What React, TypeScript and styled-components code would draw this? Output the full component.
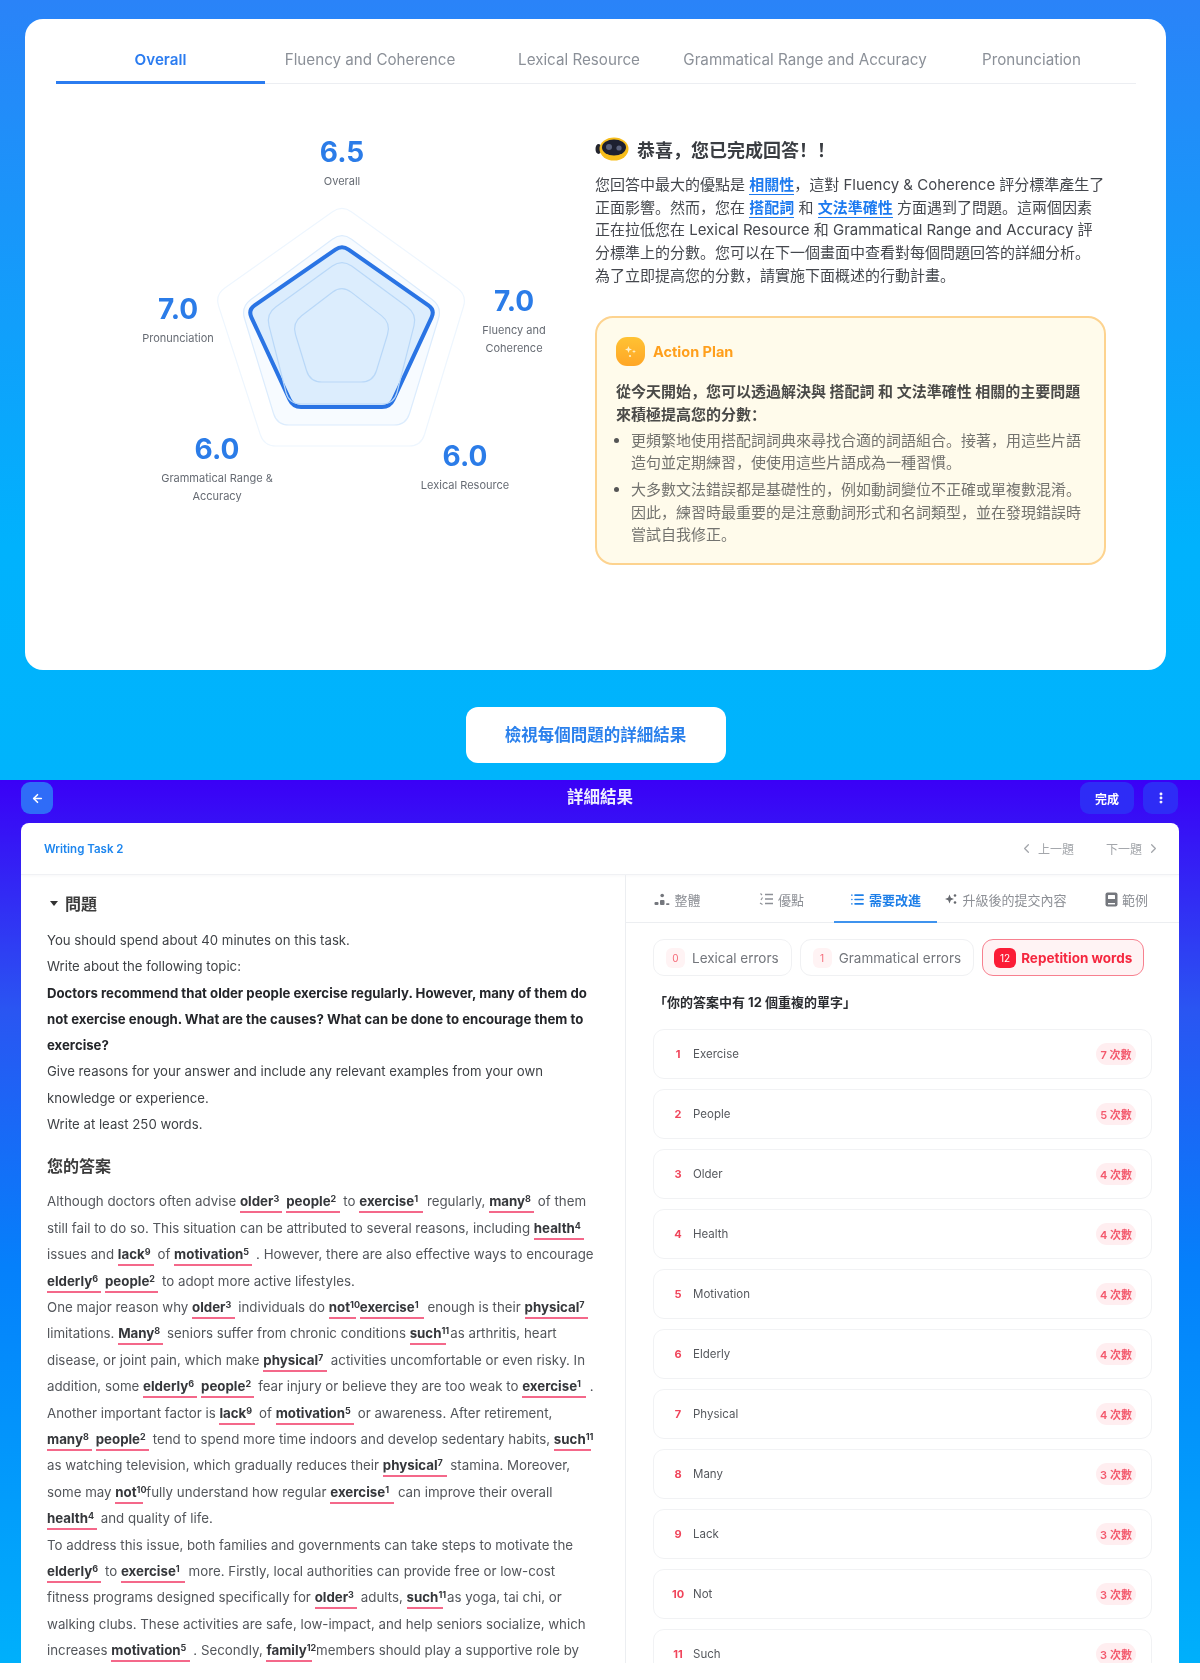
import React from "react";
import styled, { createGlobalStyle } from "styled-components";
import { ArrowLeft, ChevronLeft, ChevronRight, EllipsisVertical, List } from "lucide-react";

const GlobalStyle = createGlobalStyle`
  * { box-sizing: border-box; }
  html, body { margin: 0; padding: 0; background: #fff; }
  body {
    font-family: Inter, "Noto Sans CJK SC", "Noto Sans", sans-serif;
    color: #333;
  }
`;

const Page = styled.div`
  width: 1200px;
  height: 1680px;
  overflow: hidden;
  filter: blur(0.35px);
`;

/* top: results summary */
const Summary = styled.section`
  height: 780px;
  padding: 19px 34px 0 25px;
  background: linear-gradient(180deg, #2a83f8 0%, #00b2fd 70%, #00b4fc 100%);
`;

const SummaryCard = styled.div`
  height: 651px;
  padding: 16px 30px 0 31px;
  background: #fff;
  border-radius: 18px;
`;

const ScoreTabs = styled.div`
  display: grid;
  grid-template-columns: 209px 210px 208px 244px 209px;
  border-bottom: 1px solid #eceef2;
  height: 49px;
`;

const ScoreTab = styled.div<{ $active?: boolean }>`
  display: flex;
  align-items: center;
  justify-content: center;
  height: 49px;
  padding-top: 3px;
  font-size: 15.2px;
  white-space: nowrap;
  font-weight: ${(p) => (p.$active ? 600 : 400)};
  color: ${(p) => (p.$active ? "#2b7cf0" : "#8b9098")};
  border-bottom: 3px solid ${(p) => (p.$active ? "#2b7cf0" : "transparent")};
`;

const SummaryBody = styled.div`
  display: grid;
  grid-template-columns: 514px 512px;
  column-gap: 25px;
  padding-top: 46px;
`;

const RadarBox = styled.div`
  position: relative;
  width: 514px;
  height: 430px;
`;

const ScoreLabel = styled.div`
  position: absolute;
  width: 140px;
  transform: translateX(-50%);
  text-align: center;
`;

const ScoreValue = styled.div`
  font-size: 28px;
  line-height: 34px;
  font-weight: 700;
  color: #2b7ce8;
`;

const ScoreName = styled.div`
  margin-top: 4px;
  font-size: 11px;
  line-height: 17.5px;
  color: #666b73;
`;

const Feedback = styled.div`
  padding-top: 3px;
`;

const Greeting = styled.h2`
  display: flex;
  align-items: center;
  gap: 8px;
  margin: 0;
  height: 32px;
  font-size: 18px;
  font-weight: 700;
  color: #3a3d42;
`;

const Intro = styled.p`
  margin: 9px 0 0;
  width: 510px;
  font-size: 15px;
  line-height: 22.7px;
  color: #44474d;
`;

const Highlight = styled.span`
  color: #1c7af0;
  font-weight: 700;
  border-bottom: 1.5px solid #1c7af0;
`;

const PlanBox = styled.div`
  margin-top: 28px;
  width: 511px;
  height: 249px;
  padding: 19px 19px;
  background: #fffbeb;
  border: 2px solid #fdd38f;
  border-radius: 18px;
`;

const PlanHead = styled.div`
  display: flex;
  align-items: center;
  gap: 8px;
  font-size: 14.5px;
  font-weight: 700;
  color: #ff9f1c;
`;

const PlanIcon = styled.div`
  display: flex;
  align-items: center;
  justify-content: center;
  width: 29px;
  height: 29px;
  border-radius: 11px;
  background: linear-gradient(180deg, #ffc233, #ffa626);
`;

const PlanLead = styled.p`
  margin: 14px 0 0;
  font-size: 15px;
  line-height: 23px;
  font-weight: 700;
  color: #4a4a48;
`;

const PlanList = styled.ul`
  margin: 4px 0 0;
  padding: 0 0 0 15px;
  font-size: 15px;
  line-height: 22.7px;
  color: #73736f;
`;

const PlanItem = styled.li`
  margin-bottom: 4px;
  &::marker { color: #555; }
`;

const Cta = styled.button`
  display: block;
  width: 260px;
  height: 56px;
  margin: 37px auto 0;
  padding: 0 0 2px;
  border: 0;
  border-radius: 12px;
  background: #fff;
  font-family: inherit;
  font-size: 16.5px;
  font-weight: 700;
  color: #2a80ec;
`;

/* bottom: detail view, stops short of the page end */
const Detail = styled.section`
  height: 883px;
  display: flex;
  flex-direction: column;
  padding: 0 21px;
  background: linear-gradient(180deg, #3a00f6 0%, #2a55f2 26%, #0580fb 55%, #00b0fb 100%);
`;

const TopBar = styled.header`
  display: grid;
  grid-template-columns: 1fr auto 1fr;
  align-items: start;
  height: 43px;
  padding-top: 2px;
  flex: none;
`;

const BarGroup = styled.div<{ $end?: boolean }>`
  display: flex;
  gap: 9px;
  justify-content: ${(p) => (p.$end ? "flex-end" : "flex-start")};
  padding-right: ${(p) => (p.$end ? "1px" : "0")};
`;

const BarTitle = styled.div`
  font-size: 16.5px;
  line-height: 30px;
  font-weight: 700;
  color: #eef0ff;
`;

const BarButton = styled.button<{ $bright?: boolean; $wide?: boolean }>`
  display: flex;
  align-items: center;
  justify-content: center;
  width: ${(p) => (p.$wide ? "54px" : p.$bright ? "32px" : "35px")};
  height: 32px;
  padding: 0;
  border: 0;
  border-radius: 9px;
  font-family: inherit;
  font-size: 12px;
  font-weight: 700;
  color: #fff;
  background: ${(p) => (p.$bright ? "#2f6cf8" : "#2e2cf6")};
`;

const DetailCard = styled.div`
  flex: 1;
  min-height: 0;
  overflow: hidden;
  background: #fff;
  border-radius: 8px 8px 0 0;
`;

const CardHead = styled.div`
  display: flex;
  align-items: center;
  justify-content: space-between;
  height: 52px;
  padding: 0 18px 0 23px;
  border-bottom: 1px solid #f0f1f4;
  box-shadow: 0 1px 3px rgba(20, 30, 60, 0.03);
`;

const TaskName = styled.div`
  font-size: 11.5px;
  font-weight: 600;
  color: #1e86ee;
`;

const Pager = styled.div`
  display: flex;
  gap: 32px;
`;

const PagerLink = styled.div`
  display: flex;
  align-items: center;
  gap: 4px;
  font-size: 12px;
  color: #a3a6ab;
`;

const Split = styled.div`
  display: grid;
  grid-template-columns: 605px 553px;
`;

const Question = styled.div`
  padding: 17px 26px 0;
  border-right: 1px solid #eceef1;
  height: 788px;
  overflow: hidden;
`;

const SectionTitle = styled.h3`
  display: flex;
  align-items: center;
  gap: 7px;
  margin: 0;
  height: 22px;
  font-size: 16px;
  font-weight: 700;
  color: #3c3c3c;
`;

const Caret = styled.span`
  width: 0;
  height: 0;
  margin-left: 3px;
  border-left: 4.5px solid transparent;
  border-right: 4.5px solid transparent;
  border-top: 5px solid #333;
`;

const Prompt = styled.div`
  margin-top: 13px;
  font-size: 13.2px;
  line-height: 26.3px;
  color: #3f4246;
`;

const PromptStrong = styled.div`
  font-weight: 700;
  color: #24262a;
`;

const AnswerTitle = styled(SectionTitle)`
  margin-top: 17px;
`;

const Answer = styled.div`
  margin-top: 12px;
  font-size: 13.3px;
  line-height: 26.4px;
  white-space: pre;
  color: #53565b;
`;

const Marked = styled.span`
  padding-bottom: 2px;
  font-weight: 700;
  color: #35373b;
  border-bottom: 2px solid #f4688a;
`;

const MarkNo = styled.sup<{ $wide: boolean }>`
  display: inline-block;
  min-width: 9px;
  margin-right: ${(p) => (p.$wide ? "-4px" : "0")};
  font-size: 9px;
  line-height: 0;
  vertical-align: 4px;
`;

const Review = styled.div`
  min-width: 0;
`;

const ReviewTabs = styled.div`
  display: grid;
  grid-template-columns: 103px 105px 103px 137px 1fr;
  height: 48px;
  border-bottom: 1px solid #eceef1;
`;

const ReviewTab = styled.div<{ $active?: boolean }>`
  display: flex;
  align-items: center;
  justify-content: center;
  gap: 4px;
  height: 48px;
  padding-top: 2px;
  font-size: 13px;
  white-space: nowrap;
  font-weight: ${(p) => (p.$active ? 700 : 400)};
  color: ${(p) => (p.$active ? "#1e7fe8" : "#8d9096")};
  border-bottom: 2px solid ${(p) => (p.$active ? "#3f93ee" : "transparent")};
`;

const ReviewBody = styled.div`
  padding: 16px 27px 0 27px;
`;

const Filters = styled.div`
  display: flex;
  gap: 8px;
`;

const Filter = styled.div<{ $on?: boolean }>`
  display: flex;
  align-items: center;
  gap: ${(p) => (p.$on ? "5px" : "7px")};
  height: 37px;
  padding: 0 ${(p) => (p.$on ? "11px" : "12px")};
  font-size: 13.5px;
  white-space: nowrap;
  font-weight: ${(p) => (p.$on ? 700 : 400)};
  color: ${(p) => (p.$on ? "#f5273f" : "#73767c")};
  background: ${(p) => (p.$on ? "#fff3f4" : "#fff")};
  border: ${(p) => (p.$on ? "1.5px solid #f7808f" : "1px solid #f0f1f3")};
  border-radius: 11px;
`;

const FilterCount = styled.span<{ $on?: boolean }>`
  display: flex;
  align-items: center;
  justify-content: center;
  min-width: ${(p) => (p.$on ? "22px" : "19px")};
  height: 20px;
  border-radius: 6px;
  font-size: 10px;
  font-weight: 400;
  color: ${(p) => (p.$on ? "#fff" : "#f56a78")};
  background: ${(p) => (p.$on ? "#fb1c36" : "#fff3f4")};
`;

const RepeatTitle = styled.div`
  margin: 16px 0 17px 1px;
  font-size: 13px;
  line-height: 20px;
  font-weight: 700;
  color: #2a2c30;
`;

const WordRows = styled.div`
  display: flex;
  flex-direction: column;
  gap: 10px;
`;

const WordRow = styled.div`
  display: flex;
  align-items: center;
  flex: none;
  height: 50px;
  padding: 0 15px 0 14px;
  border: 1px solid #f1f2f4;
  border-radius: 11px;
`;

const WordNo = styled.span`
  width: 20px;
  margin-right: 5px;
  text-align: center;
  font-size: 11px;
  font-weight: 700;
  color: #f0455b;
`;

const WordText = styled.span`
  flex: 1;
  font-size: 11.5px;
  color: #55585d;
`;

const WordCount = styled.span`
  display: flex;
  align-items: center;
  justify-content: center;
  width: 40px;
  height: 22px;
  border-radius: 11px;
  font-size: 11px;
  font-weight: 600;
  color: #f3596d;
  background: #ffeef0;
`;

const tabs = ["Overall", "Fluency and Coherence", "Lexical Resource", "Grammatical Range and Accuracy", "Pronunciation"];

// page coordinates, the svg viewBox starts at the radar box corner
const ox = 56;
const oy = 130;

const scores = [
  { value: "6.5", name: ["Overall"], x: 342, y: 135 },
  { value: "7.0", name: ["Fluency and", "Coherence"], x: 514, y: 284 },
  { value: "6.0", name: ["Lexical Resource"], x: 465, y: 439 },
  { value: "6.0", name: ["Grammatical Range &", "Accuracy"], x: 217, y: 432 },
  { value: "7.0", name: ["Pronunciation"], x: 178, y: 292 },
];

type Pt = [number, number];

function roundedPath(pts: Pt[], r: number) {
  const n = pts.length;
  let d = "";
  pts.forEach((p, i) => {
    const a = pts[(i + n - 1) % n];
    const b = pts[(i + 1) % n];
    const la = Math.hypot(a[0] - p[0], a[1] - p[1]);
    const lb = Math.hypot(b[0] - p[0], b[1] - p[1]);
    const s: Pt = [p[0] + ((a[0] - p[0]) * r) / la, p[1] + ((a[1] - p[1]) * r) / la];
    const e: Pt = [p[0] + ((b[0] - p[0]) * r) / lb, p[1] + ((b[1] - p[1]) * r) / lb];
    d += `${i === 0 ? "M" : "L"}${s[0].toFixed(1)} ${s[1].toFixed(1)}Q${p[0]} ${p[1]} ${e[0].toFixed(1)} ${e[1].toFixed(1)}`;
  });
  return d + "Z";
}

const rings: { pts: Pt[]; stroke: string; fill: string }[] = [
  { pts: [[342, 205], [467, 295], [421, 446], [264, 446], [215, 295]], stroke: "#eef6fe", fill: "#fff" },
  { pts: [[342, 232], [442, 307], [406, 425], [277, 425], [241, 307]], stroke: "#dcecfd", fill: "#f7fbff" },
];

const innerRings: { pts: Pt[]; stroke: string }[] = [
  { pts: [[342, 259], [417, 314], [394, 404], [289, 404], [266, 314]], stroke: "#b9d8f8" },
  { pts: [[342, 285], [391, 323], [373, 382], [310, 382], [292, 323]], stroke: "#b9d8f8" },
];

const dataShape: Pt[] = [[342, 245], [435, 310], [390, 407], [293, 407], [248, 310]];

function Radar() {
  return (
    <RadarBox>
      <svg width="514" height="430" viewBox={`${ox} ${oy} 514 430`}>
        {rings.map((ring, i) => (
          <path key={i} d={roundedPath(ring.pts, 12)} fill={ring.fill} stroke={ring.stroke} strokeWidth="1.2" />
        ))}
        <path d={roundedPath(dataShape, 8)} fill="#dcedfd" stroke="#2a74e4" strokeWidth="4" strokeLinejoin="round" />
        {innerRings.map((ring, i) => (
          <path key={i} d={roundedPath(ring.pts, 12)} fill="none" stroke={ring.stroke} strokeWidth="1.2" />
        ))}
      </svg>
      {scores.map((s) => (
        <ScoreLabel key={s.value + s.x} style={{ left: s.x - ox, top: s.y - oy }}>
          <ScoreValue>{s.value}</ScoreValue>
          <ScoreName>
            {s.name.map((line) => (
              <div key={line}>{line}</div>
            ))}
          </ScoreName>
        </ScoreLabel>
      ))}
    </RadarBox>
  );
}

function RobotIcon() {
  return (
    <svg width="34" height="26" viewBox="0 0 34 26">
      <ellipse cx="3.5" cy="13" rx="3" ry="5" fill="#23252e" />
      <ellipse cx="19" cy="13" rx="14.5" ry="11.5" fill="#f7bd1a" />
      <ellipse cx="19" cy="11.5" rx="12" ry="8" fill="#1d2030" />
      <circle cx="14" cy="11" r="3" fill="#59607a" />
      <circle cx="24" cy="12" r="2.6" fill="#59607a" />
    </svg>
  );
}

function SparkDots() {
  return (
    <svg width="17" height="17" viewBox="0 0 17 17" fill="#fff1c9">
      <path d="M6.5 3l.9 2.6 2.6.9-2.6.9-.9 2.6-.9-2.6-2.6-.9 2.6-.9z" />
      <path d="M12 6.5l.5 1.5 1.5.5-1.5.5-.5 1.5-.5-1.5-1.5-.5 1.5-.5z" />
      <circle cx="8" cy="13" r="1.1" />
    </svg>
  );
}

function ChartIcon() {
  return (
    <svg width="16" height="14" viewBox="0 0 16 14" fill="#74777d">
      <rect x="0.5" y="10" width="4" height="3" rx="1" />
      <rect x="6" y="8" width="4.5" height="5" rx="1" />
      <rect x="12" y="11.2" width="3.5" height="1.8" rx="0.9" />
      <circle cx="8.2" cy="3.5" r="1.8" />
    </svg>
  );
}

function ProsIcon() {
  return (
    <svg width="15" height="14" viewBox="0 0 15 14" fill="none" stroke="#8d9096" strokeWidth="1.3">
      <path d="M6 2.5h8M6 7h8M6 11.5h8" />
      <path d="M1.5 1.5l1.5 1.5M3.5 5.5L2 8M1 11l2.5 1.5" strokeWidth="1.1" />
    </svg>
  );
}

function UpgradeIcon() {
  return (
    <svg width="14" height="14" viewBox="0 0 14 14" fill="#66696f">
      <path d="M5.5 2.5l1.3 3.2 3.2 1.3-3.2 1.3-1.3 3.2-1.3-3.2L1 7l3.2-1.3z" />
      <circle cx="11" cy="3.5" r="1.3" />
      <circle cx="11" cy="10.5" r="1.3" />
    </svg>
  );
}

function BookIcon() {
  return (
    <svg width="13" height="15" viewBox="0 0 13 15">
      <rect x="0.5" y="0.5" width="12" height="14" rx="2" fill="#74777d" />
      <rect x="3" y="3" width="7" height="4" rx="0.5" fill="#fff" />
      <rect x="3" y="11" width="7" height="1.4" fill="#fff" />
    </svg>
  );
}

// {word|n} marks a repeated word, lines break where the answer view breaks them
const answerParas = [
  [
    "Although doctors often advise {older|3} {people|2} to {exercise|1} regularly, {many|8} of them",
    "still fail to do so. This situation can be attributed to several reasons, including {health|4}",
    "issues and {lack|9} of {motivation|5} . However, there are also effective ways to encourage",
    "{elderly|6} {people|2} to adopt more active lifestyles.",
  ],
  [
    "One major reason why {older|3} individuals do {not|10} {exercise|1} enough is their {physical|7}",
    "limitations. {Many|8} seniors suffer from chronic conditions {such|11} as arthritis, heart",
    "disease, or joint pain, which make {physical|7} activities uncomfortable or even risky. In",
    "addition, some {elderly|6} {people|2} fear injury or believe they are too weak to {exercise|1} .",
    "Another important factor is {lack|9} of {motivation|5} or awareness. After retirement,",
    "{many|8} {people|2} tend to spend more time indoors and develop sedentary habits, {such|11}",
    "as watching television, which gradually reduces their {physical|7} stamina. Moreover,",
    "some may {not|10} fully understand how regular {exercise|1} can improve their overall",
    "{health|4} and quality of life.",
  ],
  [
    "To address this issue, both families and governments can take steps to motivate the",
    "{elderly|6} to {exercise|1} more. Firstly, local authorities can provide free or low-cost",
    "fitness programs designed specifically for {older|3} adults, {such|11} as yoga, tai chi, or",
    "walking clubs. These activities are safe, low-impact, and help seniors socialize, which",
    "increases {motivation|5} . Secondly, {family|12} members should play a supportive role by",
  ],
];

function AnswerLine({ text }: { text: string }) {
  const parts = text.split(/(\{[^}]+\})/);
  return (
    <div>
      {parts.map((part, i) => {
        if (!part.startsWith("{")) return <React.Fragment key={i}>{part}</React.Fragment>;
        const [word, no] = part.slice(1, -1).split("|");
        return (
          <Marked key={i}>
            {word}
            <MarkNo $wide={no.length > 1}>{no}</MarkNo>
          </Marked>
        );
      })}
    </div>
  );
}

const repeats = [
  ["Exercise", 7],
  ["People", 5],
  ["Older", 4],
  ["Health", 4],
  ["Motivation", 4],
  ["Elderly", 4],
  ["Physical", 4],
  ["Many", 3],
  ["Lack", 3],
  ["Not", 3],
  ["Such", 3],
] as const;

export default function App() {
  return (
    <Page>
      <GlobalStyle />
      <Summary>
        <SummaryCard>
          <ScoreTabs>
            {tabs.map((t, i) => (
              <ScoreTab key={t} $active={i === 0}>
                {t}
              </ScoreTab>
            ))}
          </ScoreTabs>
          <SummaryBody>
            <Radar />
            <Feedback>
              <Greeting>
                <RobotIcon />
                恭喜，您已完成回答！！
              </Greeting>
              <Intro>
                您回答中最大的優點是 <Highlight>相關性</Highlight>，這對 Fluency &amp; Coherence 評分標準產生了正面影響。然而，您在 <Highlight>搭配詞</Highlight> 和 <Highlight>文法準確性</Highlight> 方面遇到了問題。這兩個因素正在拉低您在 Lexical Resource 和 Grammatical Range and Accuracy 評分標準上的分數。您可以在下一個畫面中查看對每個問題回答的詳細分析。
                <br />
                為了立即提高您的分數，請實施下面概述的行動計畫。
              </Intro>
              <PlanBox>
                <PlanHead>
                  <PlanIcon>
                    <SparkDots />
                  </PlanIcon>
                  Action Plan
                </PlanHead>
                <PlanLead>從今天開始，您可以透過解決與 搭配詞 和 文法準確性 相關的主要問題來積極提高您的分數：</PlanLead>
                <PlanList>
                  <PlanItem>更頻繁地使用搭配詞詞典來尋找合適的詞語組合。接著，用這些片語造句並定期練習，使使用這些片語成為一種習慣。</PlanItem>
                  <PlanItem>大多數文法錯誤都是基礎性的，例如動詞變位不正確或單複數混淆。因此，練習時最重要的是注意動詞形式和名詞類型，並在發現錯誤時嘗試自我修正。</PlanItem>
                </PlanList>
              </PlanBox>
            </Feedback>
          </SummaryBody>
        </SummaryCard>
        <Cta>檢視每個問題的詳細結果</Cta>
      </Summary>
      <Detail>
        <TopBar>
          <BarGroup>
            <BarButton $bright>
              <ArrowLeft size={13} strokeWidth={3} />
            </BarButton>
          </BarGroup>
          <BarTitle>詳細結果</BarTitle>
          <BarGroup $end>
            <BarButton $wide>完成</BarButton>
            <BarButton>
              <EllipsisVertical size={14} strokeWidth={3} />
            </BarButton>
          </BarGroup>
        </TopBar>
        <DetailCard>
          <CardHead>
            <TaskName>Writing Task 2</TaskName>
            <Pager>
              <PagerLink>
                <ChevronLeft size={15} />
                上一題
              </PagerLink>
              <PagerLink>
                下一題
                <ChevronRight size={15} />
              </PagerLink>
            </Pager>
          </CardHead>
          <Split>
            <Question>
              <SectionTitle>
                <Caret />
                問題
              </SectionTitle>
              <Prompt>
                <div>You should spend about 40 minutes on this task.</div>
                <div>Write about the following topic:</div>
                <PromptStrong>
                  Doctors recommend that older people exercise regularly. However, many of them do not exercise enough. What are the causes? What can be done to encourage them to exercise?
                </PromptStrong>
                <div>Give reasons for your answer and include any relevant examples from your own knowledge or experience.</div>
                <div>Write at least 250 words.</div>
              </Prompt>
              <AnswerTitle>您的答案</AnswerTitle>
              <Answer>
                {answerParas.flat().map((line) => (
                  <AnswerLine key={line} text={line} />
                ))}
              </Answer>
            </Question>
            <Review>
              <ReviewTabs>
                <ReviewTab>
                  <ChartIcon />
                  整體
                </ReviewTab>
                <ReviewTab>
                  <ProsIcon />
                  優點
                </ReviewTab>
                <ReviewTab $active>
                  <List size={15} strokeWidth={2.5} />
                  需要改進
                </ReviewTab>
                <ReviewTab>
                  <UpgradeIcon />
                  升級後的提交內容
                </ReviewTab>
                <ReviewTab>
                  <BookIcon />
                  範例
                </ReviewTab>
              </ReviewTabs>
              <ReviewBody>
                <Filters>
                  <Filter>
                    <FilterCount>0</FilterCount>
                    Lexical errors
                  </Filter>
                  <Filter>
                    <FilterCount>1</FilterCount>
                    Grammatical errors
                  </Filter>
                  <Filter $on>
                    <FilterCount $on>12</FilterCount>
                    Repetition words
                  </Filter>
                </Filters>
                <RepeatTitle>「你的答案中有 12 個重複的單字」</RepeatTitle>
                <WordRows>
                  {repeats.map(([word, count], i) => (
                    <WordRow key={word}>
                      <WordNo>{i + 1}</WordNo>
                      <WordText>{word}</WordText>
                      <WordCount>{count} 次數</WordCount>
                    </WordRow>
                  ))}
                </WordRows>
              </ReviewBody>
            </Review>
          </Split>
        </DetailCard>
      </Detail>
    </Page>
  );
}
